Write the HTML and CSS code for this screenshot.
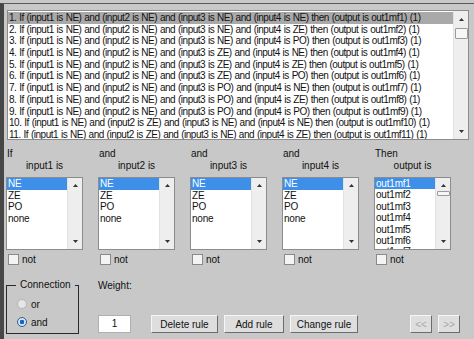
FILE: index.html
```html
<!DOCTYPE html>
<html lang="en">
<head>
  <meta charset="UTF-8">
  <title>Rule Editor</title>
  <link rel="stylesheet" href="styles.css">
</head>
<body>

<div class="frame">

  <div class="rules">
    <ul class="rule-list">
      <li class="sel">1. If (input1 is NE) and (input2 is NE) and (input3 is NE) and (input4 is NE) then (output is out1mf1) (1)</li>
      <li>2. If (input1 is NE) and (input2 is NE) and (input3 is NE) and (input4 is ZE) then (output is out1mf2) (1)</li>
      <li>3. If (input1 is NE) and (input2 is NE) and (input3 is NE) and (input4 is PO) then (output is out1mf3) (1)</li>
      <li>4. If (input1 is NE) and (input2 is NE) and (input3 is ZE) and (input4 is NE) then (output is out1mf4) (1)</li>
      <li>5. If (input1 is NE) and (input2 is NE) and (input3 is ZE) and (input4 is ZE) then (output is out1mf5) (1)</li>
      <li>6. If (input1 is NE) and (input2 is NE) and (input3 is ZE) and (input4 is PO) then (output is out1mf6) (1)</li>
      <li>7. If (input1 is NE) and (input2 is NE) and (input3 is PO) and (input4 is NE) then (output is out1mf7) (1)</li>
      <li>8. If (input1 is NE) and (input2 is NE) and (input3 is PO) and (input4 is ZE) then (output is out1mf8) (1)</li>
      <li>9. If (input1 is NE) and (input2 is NE) and (input3 is PO) and (input4 is PO) then (output is out1mf9) (1)</li>
      <li>10. If (input1 is NE) and (input2 is ZE) and (input3 is NE) and (input4 is NE) then (output is out1mf10) (1)</li>
      <li>11. If (input1 is NE) and (input2 is ZE) and (input3 is NE) and (input4 is ZE) then (output is out1mf11) (1)</li>
    </ul>
    <div class="vscroll">
      <svg class="arr" width="5" height="3" viewBox="0 0 5 3"><path d="M2.5 0L5 3H0z"/></svg>
      <span class="thumb"></span>
      <span class="fill"></span>
      <svg class="arr" width="5" height="3" viewBox="0 0 5 3"><path d="M0 0H5L2.5 3z"/></svg>
    </div>
  </div>

  <div class="columns">
    <div class="col">
      <div class="conn">If</div>
      <div class="var">input1 is</div>
      <div class="listbox">
        <ul>
          <li class="sel">NE</li><li>ZE</li><li>PO</li><li>none</li>
        </ul>
        <div class="vscroll">
          <svg class="arr" width="5" height="3" viewBox="0 0 5 3"><path d="M2.5 0L5 3H0z"/></svg>
          <span class="fill"></span>
          <svg class="arr" width="5" height="3" viewBox="0 0 5 3"><path d="M0 0H5L2.5 3z"/></svg>
        </div>
      </div>
      <div class="not"><span class="box"></span>not</div>
    </div>

    <div class="col">
      <div class="conn">and</div>
      <div class="var">input2 is</div>
      <div class="listbox">
        <ul>
          <li class="sel">NE</li><li>ZE</li><li>PO</li><li>none</li>
        </ul>
        <div class="vscroll">
          <svg class="arr" width="5" height="3" viewBox="0 0 5 3"><path d="M2.5 0L5 3H0z"/></svg>
          <span class="fill"></span>
          <svg class="arr" width="5" height="3" viewBox="0 0 5 3"><path d="M0 0H5L2.5 3z"/></svg>
        </div>
      </div>
      <div class="not"><span class="box"></span>not</div>
    </div>

    <div class="col">
      <div class="conn">and</div>
      <div class="var">input3 is</div>
      <div class="listbox">
        <ul>
          <li class="sel">NE</li><li>ZE</li><li>PO</li><li>none</li>
        </ul>
        <div class="vscroll">
          <svg class="arr" width="5" height="3" viewBox="0 0 5 3"><path d="M2.5 0L5 3H0z"/></svg>
          <span class="fill"></span>
          <svg class="arr" width="5" height="3" viewBox="0 0 5 3"><path d="M0 0H5L2.5 3z"/></svg>
        </div>
      </div>
      <div class="not"><span class="box"></span>not</div>
    </div>

    <div class="col">
      <div class="conn">and</div>
      <div class="var">input4 is</div>
      <div class="listbox">
        <ul>
          <li class="sel">NE</li><li>ZE</li><li>PO</li><li>none</li>
        </ul>
        <div class="vscroll">
          <svg class="arr" width="5" height="3" viewBox="0 0 5 3"><path d="M2.5 0L5 3H0z"/></svg>
          <span class="fill"></span>
          <svg class="arr" width="5" height="3" viewBox="0 0 5 3"><path d="M0 0H5L2.5 3z"/></svg>
        </div>
      </div>
      <div class="not"><span class="box"></span>not</div>
    </div>

    <div class="col">
      <div class="conn">Then</div>
      <div class="var">output is</div>
      <div class="listbox">
        <ul class="out">
          <li class="sel">out1mf1</li><li>out1mf2</li><li>out1mf3</li><li>out1mf4</li>
          <li>out1mf5</li><li>out1mf6</li><li>out1mf7</li>
        </ul>
        <div class="vscroll">
          <svg class="arr" width="5" height="3" viewBox="0 0 5 3"><path d="M2.5 0L5 3H0z"/></svg>
          <span class="thumb small"></span>
          <span class="fill"></span>
          <svg class="arr" width="5" height="3" viewBox="0 0 5 3"><path d="M0 0H5L2.5 3z"/></svg>
        </div>
      </div>
      <div class="not"><span class="box"></span>not</div>
    </div>
  </div>

  <div class="bottom">
    <div class="connection">
      <div class="legend">Connection</div>
      <div class="radio"><span class="dot"></span>or</div>
      <div class="radio"><span class="dot on"></span>and</div>
    </div>
    <div class="weight">
      <div class="wlabel">Weight:</div>
      <div class="wbox">1</div>
    </div>
    <div class="actions">
      <button class="btn b-del">Delete rule</button>
      <button class="btn b-add">Add rule</button>
      <button class="btn b-chg">Change rule</button>
    </div>
    <div class="nav">
      <button class="btn small" disabled>&lt;&lt;</button>
      <button class="btn small" disabled>&gt;&gt;</button>
    </div>
  </div>

</div>

</body>
</html>
```

FILE: styles.css
```css
body {
  margin: 0;
  background: #c8c8c8;
  font-family: "Liberation Sans", Arial, sans-serif;
  font-size: 10px;
  color: #111;
}
.frame {
  width: 470px;
  height: 330px;
  margin-top: 3px;
  border-top: 1px solid #5c5c5c;
  border-left: 4px solid #474747;
  border-bottom: 5px solid #474747;
  background: #c8c8c8;
  padding: 6px 0 0 3px;
  box-sizing: content-box;
}
ul {
  list-style: none;
  margin: 0;
  padding: 0;
}

/* rule list */
.rules {
  width: 460px;
  height: 128px;
  display: flex;
  background: #fff;
  border: 1px solid #8c8c8c;
}
.rule-list {
  flex: 1;
  padding-top: 1px;
  letter-spacing: -0.48px;
  word-spacing: 0.5px;
  white-space: nowrap;
  overflow: hidden;
}
.rule-list li {
  height: 11.7px;
  line-height: 11.7px;
  padding-left: 1px;
}
.rule-list li.sel {
  background: #a9a9a9;
}
.vscroll {
  width: 14px;
  background: #eeeeee;
  border-left: 1px solid #e2e2e2;
  display: flex;
  flex-direction: column;
  align-items: center;
}
.vscroll .arr {
  fill: #333;
  margin: 7px 0 6px;
}
.vscroll .fill {
  flex: 1;
}
.thumb {
  width: 11px;
  height: 9px;
  background: #f6f6f6;
  border: 1px solid #9a9a9a;
  border-radius: 1px;
  margin-top: 1px;
}
.thumb.small {
  height: 3px;
  margin-top: -2px;
}

/* input / output columns */
.columns {
  display: flex;
  gap: 15px;
  margin-top: 8px;
  margin-left: -1px;
}
.col {
  width: 77px;
}
.conn {
  height: 12px;
  line-height: 12px;
  padding-left: 1px;
}
.var {
  height: 12px;
  line-height: 12px;
  text-align: center;
  margin-bottom: 5px;
}
.listbox {
  height: 71px;
  display: flex;
  background: #fff;
  border: 1px solid #8c8c8c;
  overflow: hidden;
}
.listbox ul {
  flex: 1;
  overflow: hidden;
  letter-spacing: -0.2px;
}
.listbox li {
  height: 11.7px;
  line-height: 11px;
  padding-left: 1px;
}
.listbox ul.out li {
  height: 11.4px;
  line-height: 11.4px;
}
.listbox li.sel {
  background: #3d8fe8;
  color: #fff;
}
.listbox .vscroll .arr {
  margin: 6px 0;
}
.not {
  display: flex;
  align-items: center;
  gap: 3px;
  margin-top: 4px;
  padding-left: 2px;
  height: 11px;
}
.not .box {
  width: 9px;
  height: 9px;
  background: #f4f4f4;
  border: 1px solid #8a8a8a;
}

/* bottom controls */
.bottom {
  display: flex;
  align-items: flex-end;
  margin-top: 15px;
  margin-left: -2px;
}
.connection {
  position: relative;
  width: 73px;
  height: 49px;
  border: 1px solid #2a2a2a;
  padding: 9px 0 0 10px;
  box-sizing: border-box;
  margin-left: 1px;
}
.legend {
  position: absolute;
  top: -7px;
  left: 9px;
  padding: 0 4px;
  background: #c8c8c8;
}
.radio {
  display: flex;
  align-items: center;
  gap: 4px;
  height: 18px;
}
.dot {
  width: 8px;
  height: 8px;
  border-radius: 50%;
  background: #e6e6e6;
  border: 1px solid #b4b4b4;
}
.dot.on {
  background: radial-gradient(circle, #1b63c6 0 2px, #cfe2f6 2.5px);
  border-color: #345f8a;
}
.weight {
  margin-left: 19px;
  width: 33px;
}
.wlabel {
  margin-bottom: 24px;
}
.wbox {
  height: 16px;
  line-height: 16px;
  background: #fff;
  border: 1px solid #b0b0b0;
  text-align: center;
  margin-bottom: 1px;
}
.actions {
  display: flex;
  gap: 6px;
  margin-left: 20px;
}
.btn {
  font-family: "Liberation Sans", Arial, sans-serif;
  font-size: 10px;
  color: #111;
  height: 18px;
  padding: 0;
  background: #dedede;
  border: 1px solid;
  border-color: #f6f6f6 #6c6c6c #6c6c6c #f6f6f6;
  margin-bottom: 1px;
}
.b-del { width: 67px; }
.b-add { width: 60px; }
.b-chg { width: 68px; }
.nav {
  display: flex;
  gap: 6px;
  margin-left: 52px;
}
.btn.small {
  width: 22px;
  color: #a8a8a8;
}
```
